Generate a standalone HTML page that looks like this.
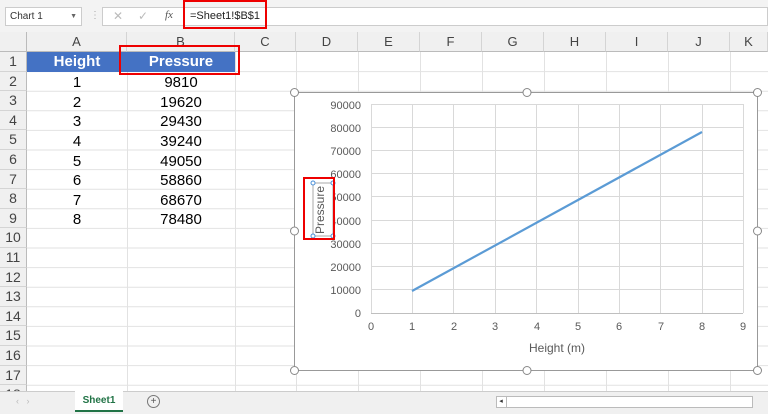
<!DOCTYPE html>
<html><head><style>
body{margin:0;width:768px;height:413px;overflow:hidden;background:#fff;font-family:"Liberation Sans",sans-serif;position:relative}
.a{position:absolute}
.rh{position:absolute;left:0;width:27px;background:#f0f0f0;border-bottom:1px solid #d4d4d4;border-right:1px solid #bbb;font-size:14px;color:#444;text-align:center;box-sizing:border-box}
.ch{position:absolute;top:32px;height:20px;background:#f0f0f0;border-right:1px solid #d4d4d4;border-bottom:1px solid #bbb;font-size:13px;color:#444;text-align:center;line-height:20px;box-sizing:border-box}
.c{position:absolute;font-size:15px;text-align:center;color:#000}
</style></head><body>
<div class="a" style="left:0;top:0;width:768px;height:32px;background:#f3f3f3"></div>
<div class="a" style="left:5px;top:7px;width:77px;height:19px;background:#fff;border:1px solid #ccc;box-sizing:border-box;font-size:10px;line-height:17px;padding-left:4px;color:#333">Chart 1<span style="position:absolute;right:4px;font-size:7px;color:#666">▼</span></div>
<div class="a" style="left:90px;top:10px;font-size:10px;color:#aaa">⋮</div>
<div class="a" style="left:102px;top:7px;width:666px;height:19px;background:#fff;border:1px solid #ccc;box-sizing:border-box"></div>
<div class="a" style="left:113px;top:9px;font-size:12px;color:#bbb">✕</div>
<div class="a" style="left:138px;top:9px;font-size:12px;color:#bbb">✓</div>
<div class="a" style="left:165px;top:9px;font-size:11px;font-style:italic;color:#555;font-family:'Liberation Serif',serif">fx</div>
<div class="a" style="left:190px;top:10px;font-size:11px;color:#222">=Sheet1!$B$1</div>
<div class="a" style="left:183px;top:0;width:84px;height:29px;border:2px solid #e00;box-sizing:border-box"></div>
<svg class="a" style="left:0;top:0" width="768" height="413">
<g stroke="#e2e2e2" stroke-width="1">
<line x1="127.5" y1="52" x2="127.5" y2="391"/><line x1="235.5" y1="52" x2="235.5" y2="391"/><line x1="296.5" y1="52" x2="296.5" y2="391"/><line x1="358.5" y1="52" x2="358.5" y2="391"/><line x1="420.5" y1="52" x2="420.5" y2="391"/><line x1="482.5" y1="52" x2="482.5" y2="391"/><line x1="544.5" y1="52" x2="544.5" y2="391"/><line x1="606.5" y1="52" x2="606.5" y2="391"/><line x1="668.5" y1="52" x2="668.5" y2="391"/><line x1="730.5" y1="52" x2="730.5" y2="391"/>
</g>
<g stroke="#e2e2e2" id="hl"></g>
</svg>
<div id="rows"></div>
<div class="a" style="left:0;top:32px;width:27px;height:20px;background:#f0f0f0;border-right:1px solid #bbb;border-bottom:1px solid #bbb;box-sizing:border-box"></div>
<div class="ch" style="left:27px;width:100px">A</div><div class="ch" style="left:127px;width:108px">B</div><div class="ch" style="left:235px;width:61px">C</div><div class="ch" style="left:296px;width:62px">D</div><div class="ch" style="left:358px;width:62px">E</div><div class="ch" style="left:420px;width:62px">F</div><div class="ch" style="left:482px;width:62px">G</div><div class="ch" style="left:544px;width:62px">H</div><div class="ch" style="left:606px;width:62px">I</div><div class="ch" style="left:668px;width:62px">J</div><div class="ch" style="left:730px;width:38px">K</div>
<div class="a" style="left:27px;top:52px;width:208px;height:20px;background:#4472c4"></div>
<div class="c" style="left:27px;top:53px;width:100px;color:#fff;font-weight:bold">Height</div>
<div class="c" style="left:127px;top:53px;width:108px;color:#fff;font-weight:bold">Pressure</div>
<div class="a" style="left:119px;top:45px;width:121px;height:30px;border:2px solid #e00;box-sizing:border-box"></div>
<script>
var r=document.getElementById('rows'),h='',hl='';
for(var i=1;i<=18;i++){var t=52+(i-1)*19.6;h+='<div class="rh" style="top:'+t+'px;height:19.6px;line-height:19.6px">'+i+'</div>';hl+='<line x1="27" x2="768" y1="'+(t+19.6)+'" y2="'+(t+19.6)+'"/>';}
var v=[9810,19620,29430,39240,49050,58860,68670,78480];
for(var i=0;i<8;i++){var t=52+(i+1)*19.6;h+='<div class="c" style="left:27px;top:'+(t+2.5)+'px;width:100px">'+(i+1)+'</div><div class="c" style="left:127px;top:'+(t+2.5)+'px;width:108px">'+v[i]+'</div>';}
r.innerHTML=h;document.getElementById('hl').innerHTML=hl;
</script>
<svg class="a" style="left:0;top:0" width="768" height="413" font-family="Liberation Sans" font-size="11" fill="#595959">
<rect x="294.5" y="92.5" width="463" height="278" fill="#fff" stroke="#999"/>
<g stroke="#d9d9d9">
<line x1="371" y1="104.5" x2="743" y2="104.5"/><line x1="371" y1="127.5" x2="743" y2="127.5"/><line x1="371" y1="150.5" x2="743" y2="150.5"/><line x1="371" y1="173.5" x2="743" y2="173.5"/><line x1="371" y1="196.5" x2="743" y2="196.5"/><line x1="371" y1="220.5" x2="743" y2="220.5"/><line x1="371" y1="243.5" x2="743" y2="243.5"/><line x1="371" y1="266.5" x2="743" y2="266.5"/><line x1="371" y1="289.5" x2="743" y2="289.5"/>
<line x1="412.5" y1="104" x2="412.5" y2="313"/><line x1="453.5" y1="104" x2="453.5" y2="313"/><line x1="495.5" y1="104" x2="495.5" y2="313"/><line x1="536.5" y1="104" x2="536.5" y2="313"/><line x1="578.5" y1="104" x2="578.5" y2="313"/><line x1="619.5" y1="104" x2="619.5" y2="313"/><line x1="660.5" y1="104" x2="660.5" y2="313"/><line x1="702.5" y1="104" x2="702.5" y2="313"/><line x1="743.5" y1="104" x2="743.5" y2="313"/>
<line x1="371.5" y1="104" x2="371.5" y2="313"/>
</g>
<line x1="371" y1="313.5" x2="743" y2="313.5" stroke="#bfbfbf"/>
<g text-anchor="end"><text x="361" y="109">90000</text><text x="361" y="132">80000</text><text x="361" y="155">70000</text><text x="361" y="178">60000</text><text x="361" y="201">50000</text><text x="361" y="225">40000</text><text x="361" y="248">30000</text><text x="361" y="271">20000</text><text x="361" y="294">10000</text><text x="361" y="317">0</text></g>
<g text-anchor="middle"><text x="371" y="330">0</text><text x="412" y="330">1</text><text x="454" y="330">2</text><text x="495" y="330">3</text><text x="537" y="330">4</text><text x="578" y="330">5</text><text x="619" y="330">6</text><text x="661" y="330">7</text><text x="702" y="330">8</text><text x="743" y="330">9</text>
<text x="557" y="352" font-size="12">Height (m)</text></g>
<polyline points="412,291 702,132" stroke="#5b9bd5" stroke-width="2.2" fill="none"/>
<rect x="313" y="183" width="20" height="53" fill="#fff" stroke="#aaa"/>
<text transform="translate(324,210) rotate(-90)" text-anchor="middle" font-size="12">Pressure</text>
<g fill="#fff" stroke="#4a90d9"><circle cx="313" cy="183" r="2"/><circle cx="333" cy="183" r="2"/><circle cx="313" cy="236" r="2"/><circle cx="333" cy="236" r="2"/></g>
<rect x="304" y="178" width="30" height="61" fill="none" stroke="#e00" stroke-width="2"/>
<g fill="#fff" stroke="#888"><circle cx="294.5" cy="92.5" r="4"/><circle cx="527" cy="92.5" r="4"/><circle cx="757.5" cy="92.5" r="4"/><circle cx="294.5" cy="231" r="4"/><circle cx="757.5" cy="231" r="4"/><circle cx="294.5" cy="370.5" r="4"/><circle cx="527" cy="370.5" r="4"/><circle cx="757.5" cy="370.5" r="4"/></g>
</svg>
<div class="a" style="left:0;top:391px;width:768px;height:22px;background:#f0f0f0;border-top:1px solid #ccc"></div>
<div class="a" style="left:16px;top:396px;font-size:9px;color:#bbb">‹ &nbsp; ›</div>
<div class="a" style="left:75px;top:390px;width:48px;height:20px;background:#fff;border-bottom:2px solid #217346;font-size:10px;font-weight:bold;color:#217346;text-align:center;line-height:22px">Sheet1</div>
<div class="a" style="left:147px;top:395px;width:11px;height:11px;border:1px solid #777;border-radius:50%;font-size:10px;line-height:11px;text-align:center;color:#555">+</div>
<div class="a" style="left:496px;top:396px;width:257px;height:12px;background:#fff;border:1px solid #bbb;box-sizing:border-box"></div>
<div class="a" style="left:496px;top:396px;width:10px;height:12px;border-right:1px solid #bbb;font-size:7px;text-align:center;line-height:12px;color:#333">◂</div>
</body></html>
